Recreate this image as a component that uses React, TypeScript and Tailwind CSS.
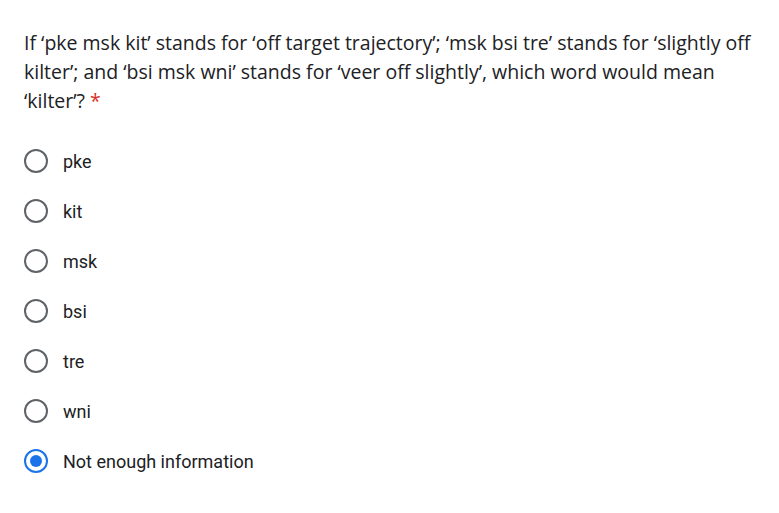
import React, { useState } from 'react';

const options = ['pke', 'kit', 'msk', 'bsi', 'tre', 'wni', 'Not enough information'];

const App: React.FC = () => {
  const [selected, setSelected] = useState('Not enough information');

  return (
    <div className="min-h-screen bg-white pl-6 pr-4 pt-[28px] text-[#202124]">
      <div className="text-[19.5px] leading-[29px] font-['Open_Sans',sans-serif]">
        If ‘pke msk kit’ stands for ‘off target trajectory’; ‘msk bsi tre’ stands for ‘slightly off kilter’; and ‘bsi msk wni’ stands for ‘veer off slightly’, which word would mean ‘kilter’?{' '}
        <span className="text-[#d93025]">*</span>
      </div>

      <div className="mt-[21px] flex flex-col">
        {options.map((opt) => {
          const on = selected === opt;
          return (
            <label
              key={opt}
              onClick={() => setSelected(opt)}
              className="flex h-[50px] cursor-pointer items-center gap-[15px]"
            >
              <span
                className={`flex h-6 w-6 items-center justify-center rounded-full border-2 ${
                  on ? 'border-[#1a73e8]' : 'border-[#5f6368]'
                }`}
              >
                {on && <span className="h-3 w-3 rounded-full bg-[#1a73e8]" />}
              </span>
              <span className="text-[18px] font-['Roboto',sans-serif] text-[#202124]">{opt}</span>
            </label>
          );
        })}
      </div>
    </div>
  );
};

export default App;
